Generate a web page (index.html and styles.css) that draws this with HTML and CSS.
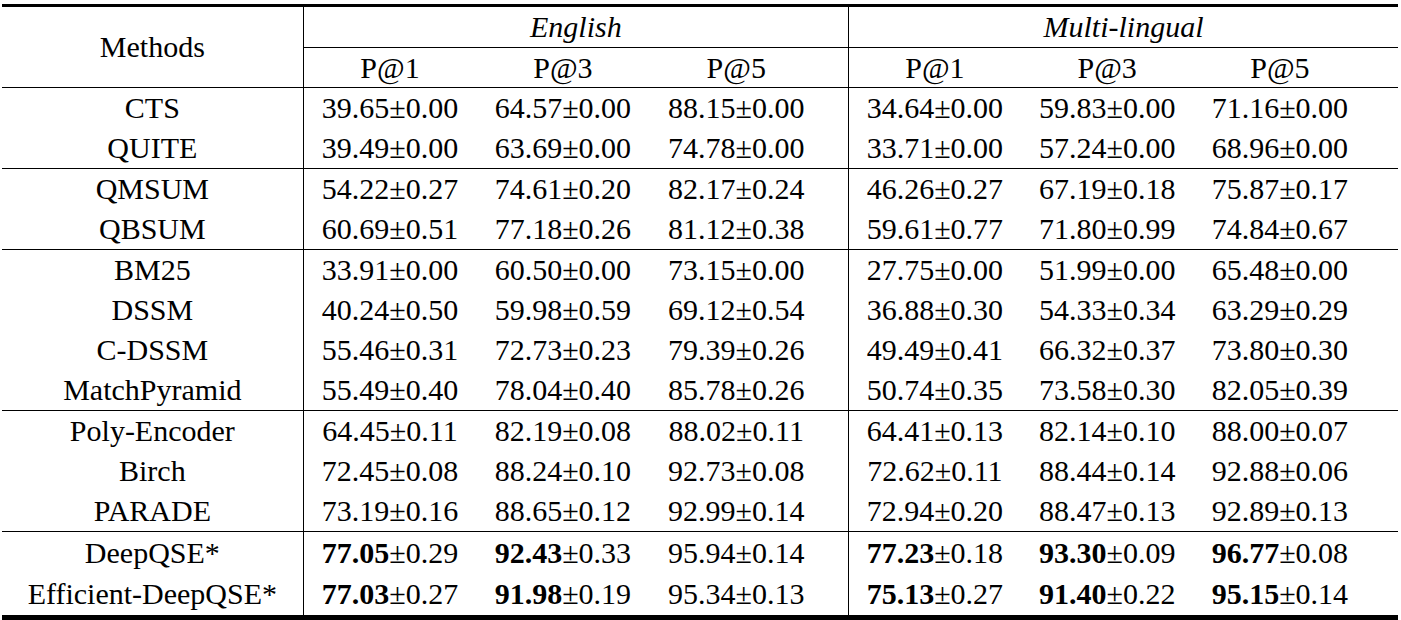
FILE: index.html
```html
<!DOCTYPE html>
<html>
<head>
<meta charset="utf-8">
<link rel="stylesheet" href="styles.css">
</head>
<body>
<table class="results">
  <colgroup>
    <col class="c-method">
    <col class="c-num">
    <col class="c-num">
    <col class="c-num-end-en">
    <col class="c-num-m1">
    <col class="c-num">
    <col class="c-num-end-ml">
  </colgroup>
  <thead>
    <tr class="hrow1">
      <th rowspan="2" class="method head-method">Methods</th>
      <th colspan="3" class="group sep">English</th>
      <th colspan="3" class="group sep">Multi-lingual</th>
    </tr>
    <tr class="hrow2">
      <th class="sep">P@1</th><th>P@3</th><th class="end-en">P@5</th>
      <th class="sep">P@1</th><th>P@3</th><th class="end-ml">P@5</th>
    </tr>
  </thead>
  <tbody class="grp first">
    <tr><td class="method">CTS</td><td class="sep">39.65±0.00</td><td>64.57±0.00</td><td class="end-en">88.15±0.00</td><td class="sep">34.64±0.00</td><td>59.83±0.00</td><td class="end-ml">71.16±0.00</td></tr>
    <tr class="last"><td class="method">QUITE</td><td class="sep">39.49±0.00</td><td>63.69±0.00</td><td class="end-en">74.78±0.00</td><td class="sep">33.71±0.00</td><td>57.24±0.00</td><td class="end-ml">68.96±0.00</td></tr>
  </tbody>
  <tbody class="grp">
    <tr><td class="method">QMSUM</td><td class="sep">54.22±0.27</td><td>74.61±0.20</td><td class="end-en">82.17±0.24</td><td class="sep">46.26±0.27</td><td>67.19±0.18</td><td class="end-ml">75.87±0.17</td></tr>
    <tr class="last"><td class="method">QBSUM</td><td class="sep">60.69±0.51</td><td>77.18±0.26</td><td class="end-en">81.12±0.38</td><td class="sep">59.61±0.77</td><td>71.80±0.99</td><td class="end-ml">74.84±0.67</td></tr>
  </tbody>
  <tbody class="grp">
    <tr><td class="method">BM25</td><td class="sep">33.91±0.00</td><td>60.50±0.00</td><td class="end-en">73.15±0.00</td><td class="sep">27.75±0.00</td><td>51.99±0.00</td><td class="end-ml">65.48±0.00</td></tr>
    <tr><td class="method">DSSM</td><td class="sep">40.24±0.50</td><td>59.98±0.59</td><td class="end-en">69.12±0.54</td><td class="sep">36.88±0.30</td><td>54.33±0.34</td><td class="end-ml">63.29±0.29</td></tr>
    <tr><td class="method">C-DSSM</td><td class="sep">55.46±0.31</td><td>72.73±0.23</td><td class="end-en">79.39±0.26</td><td class="sep">49.49±0.41</td><td>66.32±0.37</td><td class="end-ml">73.80±0.30</td></tr>
    <tr class="last"><td class="method">MatchPyramid</td><td class="sep">55.49±0.40</td><td>78.04±0.40</td><td class="end-en">85.78±0.26</td><td class="sep">50.74±0.35</td><td>73.58±0.30</td><td class="end-ml">82.05±0.39</td></tr>
  </tbody>
  <tbody class="grp">
    <tr><td class="method">Poly-Encoder</td><td class="sep">64.45±0.11</td><td>82.19±0.08</td><td class="end-en">88.02±0.11</td><td class="sep">64.41±0.13</td><td>82.14±0.10</td><td class="end-ml">88.00±0.07</td></tr>
    <tr><td class="method">Birch</td><td class="sep">72.45±0.08</td><td>88.24±0.10</td><td class="end-en">92.73±0.08</td><td class="sep">72.62±0.11</td><td>88.44±0.14</td><td class="end-ml">92.88±0.06</td></tr>
    <tr class="last"><td class="method">PARADE</td><td class="sep">73.19±0.16</td><td>88.65±0.12</td><td class="end-en">92.99±0.14</td><td class="sep">72.94±0.20</td><td>88.47±0.13</td><td class="end-ml">92.89±0.13</td></tr>
  </tbody>
  <tbody class="grp final">
    <tr><td class="method">DeepQSE*</td><td class="sep"><b>77.05</b>±0.29</td><td><b>92.43</b>±0.33</td><td class="end-en">95.94±0.14</td><td class="sep"><b>77.23</b>±0.18</td><td><b>93.30</b>±0.09</td><td class="end-ml"><b>96.77</b>±0.08</td></tr>
    <tr class="bottom"><td class="method">Efficient-DeepQSE*</td><td class="sep"><b>77.03</b>±0.27</td><td><b>91.98</b>±0.19</td><td class="end-en">95.34±0.13</td><td class="sep"><b>75.13</b>±0.27</td><td><b>91.40</b>±0.22</td><td class="end-ml"><b>95.15</b>±0.14</td></tr>
  </tbody>
</table>
</body>
</html>
```

FILE: styles.css
```css
html, body {
  margin: 0;
  padding: 0;
  background: #fff;
}

body {
  padding: 4px 0 0 2px;
  font-family: "Liberation Serif", "Times New Roman", serif;
  color: #000;
}

.results {
  border-collapse: collapse;
  table-layout: fixed;
  width: 1396px;
  font-size: 30px;
  line-height: 1;
}

.c-method { width: 301px; }
.c-num { width: 173px; }
.c-num-end-en { width: 199px; }
.c-num-m1 { width: 172px; }
.c-num-end-ml { width: 204px; }

.results th,
.results td {
  padding: 0;
  text-align: center;
  vertical-align: middle;
  font-weight: normal;
  white-space: nowrap;
  height: 40px;
}

.results b {
  font-weight: bold;
}

.results .sep {
  border-left: 1px solid #000;
}

.results .method {
  border-right: 1px solid #000;
}

.results .end-en {
  padding-right: 25px;
}

.results .end-ml {
  padding-right: 32px;
}

.results .hrow1 th {
  border-top: 3px solid #000;
  height: 40px;
}

.results .hrow1 .group {
  font-style: italic;
  border-bottom: 1px solid #000;
}

.results .hrow2 th {
  height: 39px;
}

.results .first tr:first-child td {
  border-top: 1px solid #000;
}

.results .grp tr.last td {
  border-bottom: 1px solid #000;
}

.results .grp tr.bottom td {
  border-bottom: 5px solid #000;
  height: 42px;
}

.results .final tr td {
  height: 41px;
}
```
